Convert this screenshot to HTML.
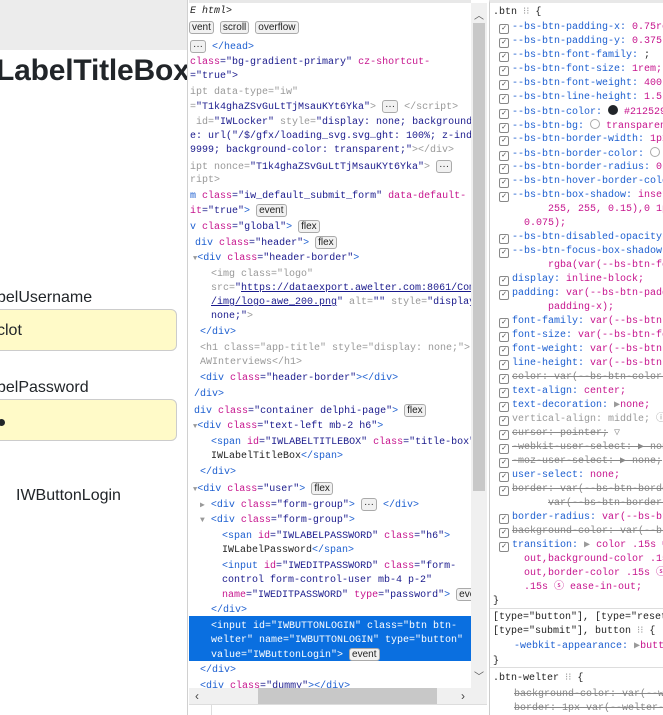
<!DOCTYPE html>
<html><head><meta charset="utf-8"><style>
*{margin:0;padding:0;box-sizing:border-box}
body{width:663px;height:715px;overflow:hidden;background:#fff;position:relative;font-family:"Liberation Sans",sans-serif}
.left{position:absolute;left:0;top:0;width:188px;height:715px;overflow:hidden;background:#fff;border-right:1px solid #d0d0d0}
.gray{position:absolute;left:0;top:0;width:188px;height:50px;background:#ececec}
.title{position:absolute;left:-4px;top:54px;font-size:30px;font-weight:bold;color:#212529;white-space:nowrap;letter-spacing:-0.2px}
.lbl{position:absolute;font-size:16px;color:#212529;white-space:nowrap}
.inp{position:absolute;left:-10px;width:187px;height:42px;background:#fffac8;border:1px solid #ccc;border-radius:6px}
.el{position:absolute;left:189px;top:0;width:282px;height:688px;overflow:hidden;font-family:"Liberation Mono",monospace;font-size:10px;color:#1a1a8c;border-top:3px solid #e8e8e8}
.el div,.st div{position:absolute;white-space:pre;line-height:14px}
.t{color:#1d5fd0}.a{color:#c6148d}.v{color:#1a1a8c}.g{color:#999}
.b{display:inline-block;border:1px solid #aaa;border-radius:3px;background:#f1f1f1;color:#222;font-family:"Liberation Sans",sans-serif;font-size:10px;line-height:11px;padding:0 2px}
.vs{position:absolute;left:471px;top:3px;width:16px;height:685px;background:#f0f0f0}
.hs{position:absolute;left:189px;top:688px;width:298px;height:16px;background:#f0f0f0}
.st{position:absolute;left:489px;top:0;width:174px;height:715px;overflow:hidden;font-family:"Liberation Mono",monospace;font-size:10px;color:#1d5fd0;border-left:1px solid #ccc;border-top:3px solid #e8e8e8}
.c{display:inline-block;width:10px;height:10px;border:1px solid #888;border-radius:2px;vertical-align:-1px;margin-right:3px;font-size:8px;line-height:8px;text-align:center;color:#444}
.s{text-decoration:line-through;color:#888}
.p{color:#c6148d}
.k{color:#222}
</style></head><body>
<div class="left">
<div class="gray"></div>
<div class="title">LabelTitleBox</div>
<div class="lbl" style="left:-3px;top:289px">belUsername</div>
<div class="inp" style="top:309px"></div>
<div class="lbl" style="left:-3px;top:322px">clot</div>
<div class="lbl" style="left:-3px;top:379px">belPassword</div>
<div class="inp" style="top:399px"></div>
<div style="position:absolute;left:-2px;top:419px;width:7px;height:7px;border-radius:50%;background:#212529"></div>
<div class="lbl" style="left:16px;top:487px">IWButtonLogin</div>
</div>

<div class="el">
<div style="top:2px;left:1px;font-style:italic" class="k">E html&gt;</div>
<div style="top:18px;left:0"><span class="b">vent</span> <span class="b">scroll</span> <span class="b">overflow</span></div>
<div style="top:37px;left:1px"><span class="b">···</span> <span class="t">&lt;/head&gt;</span></div>
<div style="top:53px;left:1px"><span class="a">class</span>=<span class="v">"bg-gradient-primary"</span> <span class="a">cz-shortcut-</span></div>
<div style="top:67px;left:1px">="true"&gt;</div>
<div style="top:83px;left:1px" class="g">ipt data-type="iw"</div>
<div style="top:97px;left:1px"><span class="g">=</span>"T1k4ghaZSvGuLtTjMsauKYt6Yka"<span class="g">&gt;</span> <span class="b">···</span> <span class="g">&lt;/script&gt;</span></div>
<div style="top:113px;left:1px"><span class="g"> id=</span>"IWLocker" <span class="g">style=</span>"display: none; background-</div>
<div style="top:127px;left:1px">e: url("/$/gfx/loading_svg.svg…ght: 100%; z-inde</div>
<div style="top:141px;left:1px">9999; background-color: transparent;"<span class="g">&gt;&lt;/div&gt;</span></div>
<div style="top:157px;left:1px"><span class="g">ipt nonce=</span>"T1k4ghaZSvGuLtTjMsauKYt6Yka"<span class="g">&gt;</span> <span class="b">···</span></div>
<div style="top:171px;left:1px" class="g">ript&gt;</div>
<div style="top:187px;left:1px"><span class="t">m</span> <span class="a">class</span>=<span class="v">"iw_default_submit_form"</span> <span class="a">data-default-</span></div>
<div style="top:201px;left:1px"><span class="a">it</span>="true"<span class="t">&gt;</span> <span class="b">event</span></div>
<div style="top:217px;left:1px"><span class="t">v</span> <span class="a">class</span>=<span class="v">"global"</span><span class="t">&gt;</span> <span class="b">flex</span></div>
<div style="top:233px;left:6px"><span class="t">div</span> <span class="a">class</span>=<span class="v">"header"</span><span class="t">&gt;</span> <span class="b">flex</span></div>
<div style="top:249px;left:4px"><span class="g" style="font-size:7px">▼</span><span class="t">&lt;div</span> <span class="a">class</span>=<span class="v">"header-border"</span><span class="t">&gt;</span></div>
<div style="top:265px;left:22px" class="g">&lt;img class="logo"</div>
<div style="top:279px;left:22px"><span class="g">src=</span>"<u>https://dataexport.awelter.com:8061/Com</u></div>
<div style="top:293px;left:22px"><u>/img/logo-awe_200.png</u>" <span class="g">alt=</span>"" <span class="g">style=</span>"display</div>
<div style="top:307px;left:22px">none;"<span class="g">&gt;</span></div>
<div style="top:323px;left:11px" class="t">&lt;/div&gt;</div>
<div style="top:339px;left:11px" class="g">&lt;h1 class="app-title" style="display: none;"&gt;</div>
<div style="top:353px;left:11px" class="g">AWInterviews&lt;/h1&gt;</div>
<div style="top:369px;left:11px"><span class="t">&lt;div</span> <span class="a">class</span>=<span class="v">"header-border"</span><span class="t">&gt;&lt;/div&gt;</span></div>
<div style="top:385px;left:5px" class="t">/div&gt;</div>
<div style="top:401px;left:5px"><span class="t">div</span> <span class="a">class</span>=<span class="v">"container delphi-page"</span><span class="t">&gt;</span> <span class="b">flex</span></div>
<div style="top:417px;left:4px"><span class="g" style="font-size:7px">▼</span><span class="t">&lt;div</span> <span class="a">class</span>=<span class="v">"text-left mb-2 h6"</span><span class="t">&gt;</span></div>
<div style="top:433px;left:22px"><span class="t">&lt;span</span> <span class="a">id</span>=<span class="v">"IWLABELTITLEBOX"</span> <span class="a">class</span>=<span class="v">"title-box"</span></div>
<div style="top:447px;left:22px" class="k">IWLabelTitleBox<span class="t">&lt;/span&gt;</span></div>
<div style="top:463px;left:11px" class="t">&lt;/div&gt;</div>
<div style="top:479px;left:4px"><span class="g" style="font-size:7px">▼</span><span class="t">&lt;div</span> <span class="a">class</span>=<span class="v">"user"</span><span class="t">&gt;</span> <span class="b">flex</span></div>
<div style="top:495px;left:11px"><span class="g" style="font-size:8px">▶</span> <span class="t">&lt;div</span> <span class="a">class</span>=<span class="v">"form-group"</span><span class="t">&gt;</span> <span class="b">···</span> <span class="t">&lt;/div&gt;</span></div>
<div style="top:511px;left:11px"><span class="g" style="font-size:8px">▼</span> <span class="t">&lt;div</span> <span class="a">class</span>=<span class="v">"form-group"</span><span class="t">&gt;</span></div>
<div style="top:527px;left:33px"><span class="t">&lt;span</span> <span class="a">id</span>=<span class="v">"IWLABELPASSWORD"</span> <span class="a">class</span>=<span class="v">"h6"</span><span class="t">&gt;</span></div>
<div style="top:541px;left:33px" class="k">IWLabelPassword<span class="t">&lt;/span&gt;</span></div>
<div style="top:557px;left:33px"><span class="t">&lt;input</span> <span class="a">id</span>=<span class="v">"IWEDITPASSWORD"</span> <span class="a">class</span>=<span class="v">"form-</span></div>
<div style="top:571px;left:33px">control form-control-user mb-4 p-2"</div>
<div style="top:585px;left:33px"><span class="a">name</span>=<span class="v">"IWEDITPASSWORD"</span> <span class="a">type</span>=<span class="v">"password"</span><span class="t">&gt;</span> <span class="b">event</span></div>
<div style="top:601px;left:22px" class="t">&lt;/div&gt;</div>
<div style="top:613px;left:0;width:282px;height:45px;background:#0a6fe0"></div>
<div style="top:617px;left:22px;color:#fff">&lt;input id="IWBUTTONLOGIN" class="btn btn-</div>
<div style="top:631px;left:22px;color:#fff">welter" name="IWBUTTONLOGIN" type="button"</div>
<div style="top:645px;left:22px;color:#fff">value="IWButtonLogin"&gt; <span class="b">event</span></div>
<div style="top:661px;left:11px" class="t">&lt;/div&gt;</div>
<div style="top:677px;left:11px"><span class="t">&lt;div</span> <span class="a">class</span>=<span class="v">"dummy"</span><span class="t">&gt;&lt;/div&gt;</span></div>
</div>
<div class="vs"><div style="position:absolute;left:2px;top:20px;width:12px;height:468px;background:#c8c8c8"></div>
<div style="position:absolute;left:3px;top:4px;font-size:10px;color:#555">︿</div>
<div style="position:absolute;left:3px;top:665px;font-size:10px;color:#555">﹀</div></div>
<div class="hs"><div style="position:absolute;left:69px;top:0;width:179px;height:16px;background:#c8c8c8"></div>
<div style="position:absolute;left:6px;top:1px;font-size:12px;color:#444">‹</div>
<div style="position:absolute;left:272px;top:1px;font-size:12px;color:#444">›</div></div>
<div style="position:absolute;left:189px;top:704px;width:298px;height:11px;border-top:1px solid #ddd;background:#fff"></div>
<div style="position:absolute;left:211px;top:704px;width:1px;height:11px;background:#ddd"></div>

<div class="st">
<div style="top:3px;left:3px" class="k">.btn <span class="g">⁝⁝</span> {</div>
<div style="top:18px;left:9px"><span class="c">✓</span>--bs-btn-padding-x: <span class="p">0.75rem</span></div>
<div style="top:32px;left:9px"><span class="c">✓</span>--bs-btn-padding-y: <span class="p">0.375rem</span></div>
<div style="top:46px;left:9px"><span class="c">✓</span>--bs-btn-font-family: <span class="k">;</span></div>
<div style="top:60px;left:9px"><span class="c">✓</span>--bs-btn-font-size: <span class="p">1rem;</span></div>
<div style="top:74px;left:9px"><span class="c">✓</span>--bs-btn-font-weight: <span class="p">400;</span></div>
<div style="top:88px;left:9px"><span class="c">✓</span>--bs-btn-line-height: <span class="p">1.5;</span></div>
<div style="top:102px;left:9px"><span class="c">✓</span>--bs-btn-color: <span style="display:inline-block;width:10px;height:10px;border-radius:50%;background:#212529;vertical-align:-1px"></span> <span class="p">#212529;</span></div>
<div style="top:116px;left:9px"><span class="c">✓</span>--bs-btn-bg: <span style="display:inline-block;width:10px;height:10px;border-radius:50%;border:1px solid #aaa;vertical-align:-1px"></span> <span class="p">transparent;</span></div>
<div style="top:130px;left:9px"><span class="c">✓</span>--bs-btn-border-width: <span class="p">1px;</span></div>
<div style="top:144px;left:9px"><span class="c">✓</span>--bs-btn-border-color: <span style="display:inline-block;width:10px;height:10px;border-radius:50%;border:1px solid #aaa;vertical-align:-1px"></span></div>
<div style="top:158px;left:9px"><span class="c">✓</span>--bs-btn-border-radius: <span class="p">0.375rem</span></div>
<div style="top:172px;left:9px"><span class="c">✓</span>--bs-btn-hover-border-color</div>
<div style="top:186px;left:9px"><span class="c">✓</span>--bs-btn-box-shadow: <span class="p">inset 0</span></div>
<div style="top:200px;left:58px" class="p">255, 255, 0.15),0 1px</div>
<div style="top:214px;left:34px" class="p">0.075);</div>
<div style="top:228px;left:9px"><span class="c">✓</span>--bs-btn-disabled-opacity</div>
<div style="top:242px;left:9px"><span class="c">✓</span>--bs-btn-focus-box-shadow</div>
<div style="top:256px;left:58px" class="p">rgba(var(--bs-btn-focus</div>
<div style="top:270px;left:9px"><span class="c">✓</span>display: <span class="p">inline-block;</span></div>
<div style="top:284px;left:9px"><span class="c">✓</span>padding: <span class="p">var(--bs-btn-padding-y)</span></div>
<div style="top:298px;left:58px" class="p">padding-x);</div>
<div style="top:312px;left:9px"><span class="c">✓</span>font-family: <span class="p">var(--bs-btn-font</span></div>
<div style="top:326px;left:9px"><span class="c">✓</span>font-size: <span class="p">var(--bs-btn-font</span></div>
<div style="top:340px;left:9px"><span class="c">✓</span>font-weight: <span class="p">var(--bs-btn-font</span></div>
<div style="top:354px;left:9px"><span class="c">✓</span>line-height: <span class="p">var(--bs-btn-line</span></div>
<div style="top:368px;left:9px"><span class="c">✓</span><span class="s">color: var(--bs-btn-color);</span></div>
<div style="top:382px;left:9px"><span class="c">✓</span>text-align: <span class="p">center;</span></div>
<div style="top:396px;left:9px"><span class="c">✓</span>text-decoration: <span class="g">▶</span><span class="p">none;</span></div>
<div style="top:410px;left:9px"><span class="c">✓</span><span class="g">vertical-align: middle; ⓘ</span></div>
<div style="top:424px;left:9px"><span class="c">✓</span><span class="s">cursor: pointer;</span> <span class="g">▽</span></div>
<div style="top:438px;left:9px"><span class="c">✓</span><span class="s">-webkit-user-select: ▶ none;</span></div>
<div style="top:452px;left:9px"><span class="c">✓</span><span class="s">-moz-user-select: ▶ none;</span></div>
<div style="top:466px;left:9px"><span class="c">✓</span>user-select: <span class="p">none;</span></div>
<div style="top:480px;left:9px"><span class="c">✓</span><span class="s">border: var(--bs-btn-border-width)</span></div>
<div style="top:494px;left:58px"><span class="s">var(--bs-btn-border-color)</span></div>
<div style="top:508px;left:9px"><span class="c">✓</span>border-radius: <span class="p">var(--bs-btn-border</span></div>
<div style="top:522px;left:9px"><span class="c">✓</span><span class="s">background-color: var(--bs-btn-bg)</span></div>
<div style="top:536px;left:9px"><span class="c">✓</span>transition: <span class="g">▶</span> <span class="p">color .15s ⓢ ease-in-</span></div>
<div style="top:550px;left:34px" class="p">out,background-color .15s</div>
<div style="top:564px;left:34px" class="p">out,border-color .15s ⓢ ease</div>
<div style="top:578px;left:34px" class="p">.15s ⓢ ease-in-out;</div>
<div style="top:592px;left:3px" class="k">}</div>
<div style="top:605px;left:0;width:174px;height:1px;background:#ddd"></div>
<div style="top:608px;left:3px" class="k">[type="button"], [type="reset"],</div>
<div style="top:622px;left:3px" class="k">[type="submit"], button <span class="g">⁝⁝</span> {</div>
<div style="top:637px;left:24px">-webkit-appearance: <span class="g">▶</span><span class="p">button;</span></div>
<div style="top:652px;left:3px" class="k">}</div>
<div style="top:664px;left:0;width:174px;height:1px;background:#ddd"></div>
<div style="top:669px;left:3px" class="k">.btn-welter <span class="g">⁝⁝</span> {</div>
<div style="top:685px;left:24px"><span class="s">background-color: var(--welter</span></div>
<div style="top:699px;left:24px"><span class="s">border: 1px var(--welter-</span></div>
</div>
</body></html>
